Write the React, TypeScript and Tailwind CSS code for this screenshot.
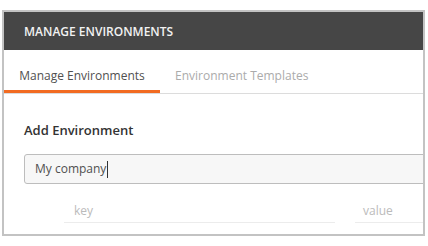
import React from "react";

export default function App() {
  return (
    <div
      className="w-[428px] h-[246px] bg-white pt-[10px] pl-[2px]"
      style={{ fontFamily: '"Open Sans", "Noto Sans", sans-serif' }}
    >
      <div className="w-[423px] h-[226px] border-2 border-[#c3c3c3] overflow-hidden flex flex-col">
        {/* title bar */}
        <div className="h-[38px] shrink-0 bg-[#464646] pl-[20px] flex items-center">
          <span className="text-[12px] font-semibold text-[#f2f2f2] pt-px">
            MANAGE ENVIRONMENTS
          </span>
        </div>

        {/* tabs */}
        <div className="h-[44px] shrink-0 flex border-b border-[#dcdcdc]">
          <button className="h-[43px] w-[156px] pt-[11px] border-b-[3px] border-[#f26b21] text-[12px] text-[#505050]">
            Manage Environments
          </button>
          <button className="h-[43px] px-[15px] pt-[11px] border-b-[3px] border-transparent text-[12px] text-[#ababab]">
            Environment Templates
          </button>
        </div>

        {/* content */}
        <div className="pl-[20px]">
          <h3 className="mt-[27px] text-[13px] font-semibold text-[#333333] leading-[18px]">
            Add Environment
          </h3>
          <div className="mt-[15px] w-[420px] h-[30px] border border-[#bdbdbd] rounded-[3px] bg-[#f7f7f7] flex items-center pl-[10px]">
            <span className="text-[12px] text-[#505050]">My company</span>
            <span className="w-px h-[17px] bg-[#333333] ml-px" />
          </div>
          <div className="ml-[40px] mt-[9px] flex gap-[20px]">
            <div className="w-[271px] shrink-0 h-[30px] pt-[6px] pl-[10px] flex items-center border-b border-[#ececec] text-[12px] text-[#bbbbbb]">
              key
            </div>
            <div className="w-[120px] shrink-0 h-[30px] pt-[6px] pl-[8px] flex items-center border-b border-[#ececec] text-[12px] text-[#bbbbbb]">
              value
            </div>
          </div>
        </div>
      </div>
    </div>
  );
}
